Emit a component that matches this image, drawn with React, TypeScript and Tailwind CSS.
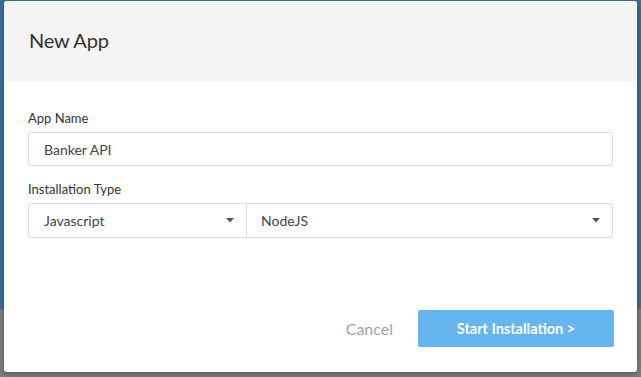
function Caret() {
  return (
    <svg width="8" height="5" viewBox="0 0 8 5" className="shrink-0">
      <path d="M0 0h8L4 4.5z" fill="#555" />
    </svg>
  );
}

export default function App() {
  return (
    <div
      className="h-[377px] w-[641px] overflow-hidden pl-[4px] pt-[1px] bg-[linear-gradient(to_bottom,#3f6f98_0,#3f6f98_82%,#7f7f7f_82%,#7f7f7f_100%)]"
      style={{ fontFamily: 'Lato, "Open Sans", sans-serif' }}
    >
      <div className="w-[633px] h-[371px] bg-white rounded-[3px] flex flex-col overflow-hidden shadow-[0_2px_6px_rgba(0,0,0,0.35)]">
        {/* Header */}
        <div className="h-[80px] bg-[#f4f4f4] flex items-center px-[25px] pb-[2px]">
          <h2 className="text-[20px] text-[#333] font-normal tracking-[-0.2px]">New App</h2>
        </div>

        {/* Body */}
        <div className="flex-1 px-[24px] pt-[29px]">
          <label className="block text-[13px] text-[#333] leading-[16px] mb-[6px]">App Name</label>
          <div className="h-[34px] border border-[#dcdcdc] rounded-[3px] flex items-center px-[15px] text-[14px] text-[#444]">
            Banker API
          </div>

          <label className="block text-[13px] text-[#333] leading-[16px] mt-[15px] mb-[6px]">Installation Type</label>
          <div className="h-[35px] border border-[#dcdcdc] rounded-[3px] flex text-[14px] text-[#444]">
            <div className="w-[218px] flex items-center justify-between pl-[15px] pr-[12px] border-r border-[#dcdcdc]">
              <span>Javascript</span>
              <Caret />
            </div>
            <div className="flex-1 flex items-center justify-between pl-[14px] pr-[12px]">
              <span>NodeJS</span>
              <Caret />
            </div>
          </div>
        </div>

        {/* Footer */}
        <div className="flex items-center justify-end gap-[25px] px-[23px] pb-[25px]">
          <button className="text-[16px] text-[#a3a3a3]">Cancel</button>
          <button className="w-[196px] h-[37px] rounded-[2px] bg-[#66b5ef] text-white text-[14.5px] font-bold flex items-center justify-center">
            Start Installation &gt;
          </button>
        </div>
      </div>
    </div>
  );
}
